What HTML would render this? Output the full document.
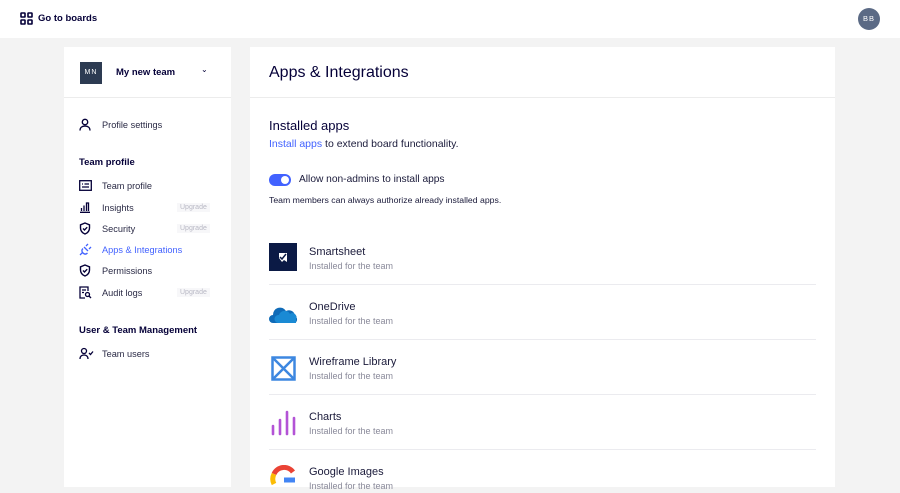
<!DOCTYPE html>
<html><head><meta charset="utf-8"><style>
*{margin:0;padding:0;box-sizing:border-box}
body{width:900px;height:484px;overflow:hidden;background:#f3f3f3;font-family:"Liberation Sans",sans-serif;color:#050038;position:relative}
.hdr{position:absolute;left:0;top:0;width:900px;height:38px;background:#fff}
.abs{position:absolute}
.side{position:absolute;left:64px;top:47px;width:167px;height:440px;background:#fff}
.main{position:absolute;left:250px;top:47px;width:585px;height:440px;background:#fff}
.nav{position:absolute;left:38px;font-size:9.2px;color:#2a2a45}
.ic{position:absolute;left:15px}
.up{position:absolute;left:113px;font-size:7px;color:#b8b8c4;background:#f7f7f9;padding:1px 3px}
.sec{position:absolute;left:15px;font-size:9.5px;font-weight:bold}
.row .n{position:absolute;left:59px;font-size:11px;color:#1a1a3a}
.row .s{position:absolute;left:59px;font-size:9px;color:#8a8a9a}
.hr{position:absolute;left:19px;width:547px;height:1px;background:#ebebef}
</style></head><body>
<div class="hdr">
<svg class="abs" style="left:20px;top:12px" width="13" height="13" viewBox="0 0 13 13" fill="none" stroke="#050038" stroke-width="1.6"><rect x="1" y="1" width="4" height="4" rx=".5"/><rect x="8" y="1" width="4" height="4" rx=".5"/><rect x="1" y="8" width="4" height="4" rx=".5"/><rect x="8" y="8" width="4" height="4" rx=".5"/></svg>
<div class="abs" style="left:38px;top:13px;font-size:9.5px;font-weight:bold">Go to boards</div>
<div class="abs" style="left:858px;top:8px;width:22px;height:22px;border-radius:50%;background:#5b6a85;color:#fff;font-size:7.5px;text-align:center;line-height:22px;letter-spacing:1px">BB</div>
</div>

<div class="side">
<div class="abs" style="left:16px;top:15px;width:22px;height:22px;background:#2d3b52;color:#fff;font-size:7px;text-align:center;line-height:22px;letter-spacing:1px">MN</div>
<div class="abs" style="left:52px;top:20px;font-size:9.5px;font-weight:bold">My new team</div>
<div class="abs" style="left:137px;top:18px;font-size:8px">⌄</div>
<div class="abs" style="left:0;top:50px;width:167px;height:1px;background:#ececec"></div>
<svg class="ic" style="top:71px" width="12" height="13" viewBox="0 0 12 13" fill="none" stroke="#050038" stroke-width="1.4"><circle cx="6" cy="4" r="2.7"/><path d="M1 12.5c0-3 2.2-4.5 5-4.5s5 1.5 5 4.5"/></svg>
<div class="nav" style="top:73px">Profile settings</div>
<div class="sec" style="top:110px">Team profile</div>
<svg class="ic" style="top:133px" width="13" height="11" viewBox="0 0 13 11" fill="none" stroke="#050038" stroke-width="1.3"><rect x=".7" y=".7" width="11.6" height="9.6"/><path d="M3 4h1M5.5 4h4.5M3 7h7"/></svg>
<div class="nav" style="top:134px">Team profile</div>
<svg class="ic" style="top:154px" width="12" height="12" viewBox="0 0 12 12" fill="none" stroke="#050038" stroke-width="1.3"><path d="M1 11.3h10M2.5 10V7M5 10V4.5M7.5 10V2h2v8"/></svg>
<div class="nav" style="top:156px">Insights</div><div class="up" style="top:156px">Upgrade</div>
<svg class="ic" style="top:175px" width="12" height="13" viewBox="0 0 12 13" fill="none" stroke="#050038" stroke-width="1.4"><path d="M6 1l4.5 1.8V6c0 3-2 5-4.5 6C3.5 11 1.5 9 1.5 6V2.8z"/><path d="M4 6.5l1.5 1.5 2.7-2.8"/></svg>
<div class="nav" style="top:177px">Security</div><div class="up" style="top:177px">Upgrade</div>
<svg class="ic" style="top:196px" width="13" height="13" viewBox="0 0 13 13" fill="none" stroke="#4262ff" stroke-width="1.3"><path d="M1 12l3-3M5 4l4 4M4 5.5c-1.5 1.5-1.5 3 0 4.5s3 1.5 4.5 0M7 3l2-2M10 6l2-2"/></svg>
<div class="nav" style="top:198px;color:#4262ff">Apps &amp; Integrations</div>
<svg class="ic" style="top:217px" width="12" height="13" viewBox="0 0 12 13" fill="none" stroke="#050038" stroke-width="1.4"><path d="M6 1l4.5 1.8V6c0 3-2 5-4.5 6C3.5 11 1.5 9 1.5 6V2.8z"/><path d="M4 6.5l1.5 1.5 2.7-2.8"/></svg>
<div class="nav" style="top:219px">Permissions</div>
<svg class="ic" style="top:239px" width="13" height="13" viewBox="0 0 13 13" fill="none" stroke="#050038" stroke-width="1.3"><path d="M6 12H1V1h8v4"/><path d="M3 4h4M3 6.5h2"/><circle cx="8.5" cy="8.5" r="2"/><path d="M10 10l2 2"/></svg>
<div class="nav" style="top:241px">Audit logs</div><div class="up" style="top:241px">Upgrade</div>
<div class="sec" style="top:278px">User &amp; Team Management</div>
<svg class="ic" style="top:300px" width="15" height="13" viewBox="0 0 15 13" fill="none" stroke="#050038" stroke-width="1.3"><circle cx="5" cy="4" r="2.5"/><path d="M1 12c0-3 2-4 4-4s4 1 4 4M10 6l1.5 1.5L14 4.5"/></svg>
<div class="nav" style="top:302px">Team users</div>
</div>

<div class="main">
<div class="abs" style="left:19px;top:17px;font-size:16px;color:#050038">Apps &amp; Integrations</div>
<div class="abs" style="left:0;top:50px;width:585px;height:1px;background:#ececec"></div>
<div class="abs" style="left:19px;top:71px;font-size:13px">Installed apps</div>
<div class="abs" style="left:19px;top:91px;font-size:10.5px;color:#1a1a3a"><span style="color:#4262ff">Install apps</span> to extend board functionality.</div>
<div class="abs" style="left:19px;top:127px;width:22px;height:12px;border-radius:6px;background:#4262ff"><div style="position:absolute;right:2px;top:2px;width:8px;height:8px;border-radius:50%;background:#fff"></div></div>
<div class="abs" style="left:49px;top:127px;font-size:10.2px;color:#1a1a3a">Allow non-admins to install apps</div>
<div class="abs" style="left:19px;top:148px;font-size:8.7px;color:#1a1a3a">Team members can always authorize already installed apps.</div>

<div class="row">
<div class="abs" style="left:19px;top:196px;width:28px;height:28px;background:#0b1a45"><svg width="28" height="28" viewBox="0 0 28 28"><path d="M10 10h8v9l-3-2-2 2-3-4z" fill="#fff"/><path d="M11 14l2 2 4-5" stroke="#0b1a45" stroke-width="1.5" fill="none"/></svg></div>
<div class="n" style="top:199px">Smartsheet</div><div class="s" style="top:214px">Installed for the team</div>
<div class="hr" style="top:237px"></div>
<svg class="abs" style="left:19px;top:257px" width="29" height="20" viewBox="0 0 29 20"><path d="M4 19a4 4 0 0 1 0-8 7 7 0 0 1 13-4 6 6 0 0 1 9 5 4 4 0 0 1 0 7z" fill="#0f6bb8"/><path d="M9 19a4 4 0 0 1 1-8 6 6 0 0 1 11-1 4 4 0 0 1 6 5v4z" fill="#1a8ad4"/></svg>
<div class="n" style="top:254px">OneDrive</div><div class="s" style="top:269px">Installed for the team</div>
<div class="hr" style="top:292px"></div>
<svg class="abs" style="left:21px;top:309px" width="25" height="25" viewBox="0 0 25 25" fill="none" stroke="#3d87e0" stroke-width="2.5"><rect x="1.5" y="1.5" width="22" height="22"/><path d="M2 2l21 21M23 2L2 23"/></svg>
<div class="n" style="top:309px">Wireframe Library</div><div class="s" style="top:324px">Installed for the team</div>
<div class="hr" style="top:347px"></div>
<svg class="abs" style="left:21px;top:363px" width="25" height="26" viewBox="0 0 25 26" stroke="#b353d6" stroke-width="2.6" stroke-linecap="round"><path d="M2 24v-8M9 24V10M16 24V2M23 24V8"/></svg>
<div class="n" style="top:364px">Charts</div><div class="s" style="top:379px">Installed for the team</div>
<div class="hr" style="top:402px"></div>
<svg class="abs" style="left:20px;top:418px" width="28" height="28" viewBox="0 0 28 28" fill="none" stroke-width="5"><path d="M23 7A11 11 0 0 0 4 9" stroke="#ea4335"/><path d="M4 9a11 11 0 0 0 0 10" stroke="#fbbc05"/><path d="M14 15h11" stroke="#4285f4"/></svg>
<div class="n" style="top:419px">Google Images</div><div class="s" style="top:434px">Installed for the team</div>
</div>
</div>
</body></html>
